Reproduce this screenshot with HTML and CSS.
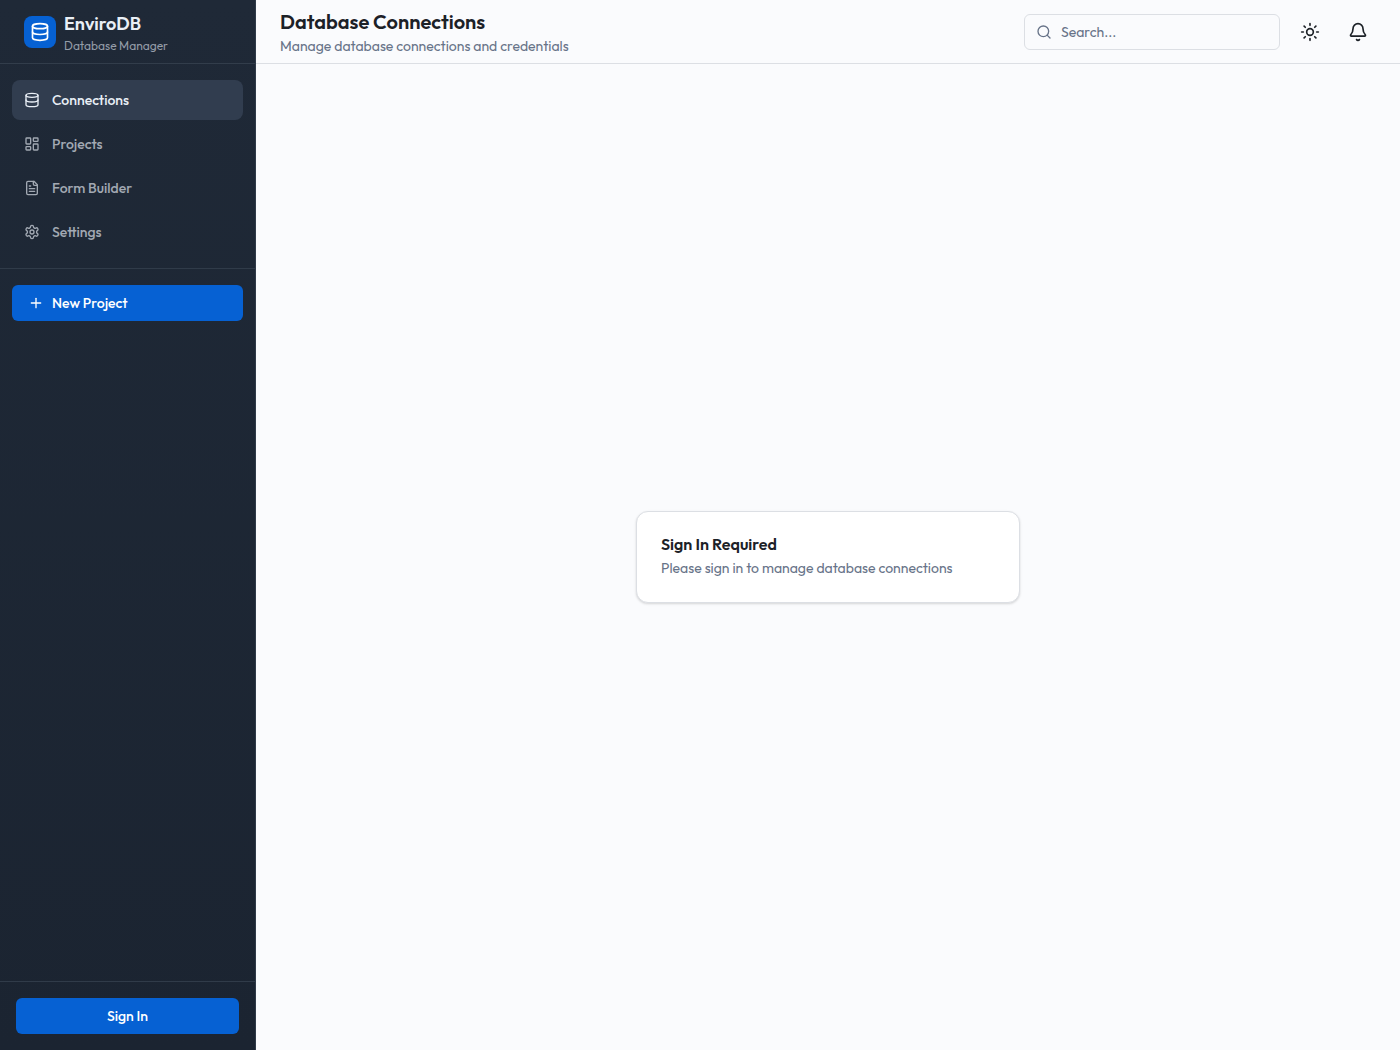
FILE: index.html
```html
<!DOCTYPE html>
<html lang="en">
<head>
<meta charset="utf-8">
<meta name="viewport" content="width=device-width, initial-scale=1">
<title>EnviroDB – Database Connections</title>
<link rel="stylesheet" href="styles.css">
</head>
<body>
<div class="app">
  <aside class="sidebar">
    <div class="brand">
      <span class="brand-logo">
        <svg class="icon icon-md" viewBox="0 0 24 24" aria-hidden="true"><ellipse cx="12" cy="5" rx="9" ry="3"/><path d="M3 5v14a9 3 0 0 0 18 0V5"/><path d="M3 12a9 3 0 0 0 18 0"/></svg>
      </span>
      <div class="brand-text">
        <span class="brand-name">EnviroDB</span>
        <span class="brand-tagline">Database Manager</span>
      </div>
    </div>
    <nav class="nav" aria-label="Main">
      <a class="nav-link nav-link-active" href="#connections" aria-current="page">
        <svg class="icon" viewBox="0 0 24 24" aria-hidden="true"><ellipse cx="12" cy="5" rx="9" ry="3"/><path d="M3 5v14a9 3 0 0 0 18 0V5"/><path d="M3 12a9 3 0 0 0 18 0"/></svg>
        Connections
      </a>
      <a class="nav-link" href="#projects">
        <svg class="icon" viewBox="0 0 24 24" aria-hidden="true"><rect x="3" y="3" width="7" height="9" rx="1"/><rect x="14" y="3" width="7" height="5" rx="1"/><rect x="14" y="12" width="7" height="9" rx="1"/><rect x="3" y="16" width="7" height="5" rx="1"/></svg>
        Projects
      </a>
      <a class="nav-link" href="#forms">
        <svg class="icon" viewBox="0 0 24 24" aria-hidden="true"><path d="M15 2H6a2 2 0 0 0-2 2v16a2 2 0 0 0 2 2h12a2 2 0 0 0 2-2V7Z"/><path d="M14 2v4a2 2 0 0 0 2 2h4"/><path d="M10 9H8"/><path d="M16 13H8"/><path d="M16 17H8"/></svg>
        Form Builder
      </a>
      <a class="nav-link" href="#settings">
        <svg class="icon" viewBox="0 0 24 24" aria-hidden="true"><path d="M12.22 2h-.44a2 2 0 0 0-2 2v.18a2 2 0 0 1-1 1.73l-.43.25a2 2 0 0 1-2 0l-.15-.08a2 2 0 0 0-2.73.73l-.22.38a2 2 0 0 0 .73 2.73l.15.1a2 2 0 0 1 1 1.72v.51a2 2 0 0 1-1 1.74l-.15.09a2 2 0 0 0-.73 2.73l.22.38a2 2 0 0 0 2.73.73l.15-.08a2 2 0 0 1 2 0l.43.25a2 2 0 0 1 1 1.73V20a2 2 0 0 0 2 2h.44a2 2 0 0 0 2-2v-.18a2 2 0 0 1 1-1.73l.43-.25a2 2 0 0 1 2 0l.15.08a2 2 0 0 0 2.73-.73l.22-.39a2 2 0 0 0-.73-2.73l-.15-.08a2 2 0 0 1-1-1.74v-.5a2 2 0 0 1 1-1.74l.15-.09a2 2 0 0 0 .73-2.73l-.22-.38a2 2 0 0 0-2.73-.73l-.15.08a2 2 0 0 1-2 0l-.43-.25a2 2 0 0 1-1-1.73V4a2 2 0 0 0-2-2z"/><circle cx="12" cy="12" r="3"/></svg>
        Settings
      </a>
    </nav>
    <div class="actions">
      <button class="button button-start" type="button">
        <svg class="icon" viewBox="0 0 24 24" aria-hidden="true"><path d="M5 12h14"/><path d="M12 5v14"/></svg>
        New Project
      </button>
    </div>
    <div class="account">
      <button class="button" type="button">Sign In</button>
    </div>
  </aside>
  <div class="content">
    <header class="topbar">
      <div class="heading">
        <h1 class="title">Database Connections</h1>
        <p class="subtitle">Manage database connections and credentials</p>
      </div>
      <div class="tools">
        <label class="search">
          <svg class="icon" viewBox="0 0 24 24" aria-hidden="true"><circle cx="11" cy="11" r="8"/><path d="m21 21-4.3-4.3"/></svg>
          <input class="search-input" type="search" placeholder="Search..." aria-label="Search">
        </label>
        <button class="icon-button" type="button" aria-label="Toggle theme">
          <svg class="icon icon-md" viewBox="0 0 24 24" aria-hidden="true"><circle cx="12" cy="12" r="4"/><path d="M12 2v2"/><path d="M12 20v2"/><path d="m4.93 4.93 1.41 1.41"/><path d="m17.66 17.66 1.41 1.41"/><path d="M2 12h2"/><path d="M20 12h2"/><path d="m6.34 17.66-1.41 1.41"/><path d="m19.07 4.93-1.41 1.41"/></svg>
        </button>
        <button class="icon-button" type="button" aria-label="Notifications">
          <svg class="icon icon-md" viewBox="0 0 24 24" aria-hidden="true"><path d="M10.27 21a2 2 0 0 0 3.46 0"/><path d="M3.26 15.33A1 1 0 0 0 4 17h16a1 1 0 0 0 .74-1.67C19.41 13.96 18 12.5 18 8A6 6 0 0 0 6 8c0 4.5-1.41 5.96-2.74 7.33"/></svg>
        </button>
      </div>
    </header>
    <main class="main">
      <section class="card">
        <h2 class="card-title">Sign In Required</h2>
        <p class="card-text">Please sign in to manage database connections</p>
      </section>
    </main>
  </div>
</div>
</body>
</html>
```
FILE: styles.css
```css
*,
*::before,
*::after {
  box-sizing: border-box;
}

body {
  margin: 0;
  background: #fafbfd;
  color: #1c2127;
  font: 400 14px/20px Outfit, Lato, sans-serif;
}

h1,
h2,
p {
  margin: 0;
}

button,
input {
  font: inherit;
  color: inherit;
}

.app {
  display: flex;
  min-height: 100vh;
}

.icon {
  width: 16px;
  height: 16px;
  flex: none;
  fill: none;
  stroke: currentColor;
  stroke-width: 2;
  stroke-linecap: round;
  stroke-linejoin: round;
}

.icon-md {
  width: 20px;
  height: 20px;
}

.sidebar {
  display: flex;
  flex-direction: column;
  flex: none;
  width: 256px;
  border-right: 1px solid #303b49;
  background: linear-gradient(#1f2937, #1b2431);
  color: #e9eff6;
}

.brand {
  display: flex;
  align-items: center;
  gap: 8px;
  height: 64px;
  padding: 0 24px;
  border-bottom: 1px solid #323d4b;
}

.brand-logo {
  display: grid;
  place-items: center;
  width: 32px;
  height: 32px;
  border-radius: 8px;
  background: #0661d3;
  color: #fff;
}

.brand-text {
  display: flex;
  flex-direction: column;
}

.brand-name {
  font-size: 18px;
  font-weight: 600;
  line-height: 28px;
}

.brand-tagline {
  color: #949ca7;
  font-size: 12px;
  line-height: 16px;
}

.nav {
  display: flex;
  flex-direction: column;
  gap: 4px;
  padding: 16px 12px;
  border-bottom: 1px solid #303b49;
}

.nav-link {
  display: flex;
  align-items: center;
  gap: 12px;
  height: 40px;
  padding: 0 12px;
  border-radius: 8px;
  color: #a2a9b3;
  font-weight: 500;
  text-decoration: none;
}

.nav-link-active {
  background: #313d4f;
  color: #e9eff6;
}

.actions {
  padding: 16px 12px;
}

.account {
  margin-top: auto;
  padding: 16px;
  border-top: 1px solid #303b49;
}

.button {
  display: flex;
  align-items: center;
  justify-content: center;
  gap: 8px;
  width: 100%;
  height: 36px;
  padding: 0 16px;
  border: 0;
  border-radius: 6px;
  background: #0661d3;
  color: #fff;
  font-weight: 500;
}

.button-start {
  justify-content: flex-start;
}

.content {
  display: flex;
  flex: 1;
  flex-direction: column;
  min-width: 0;
}

.topbar {
  display: flex;
  align-items: center;
  justify-content: space-between;
  gap: 24px;
  height: 64px;
  padding: 0 24px;
  border-bottom: 1px solid #dcdfe4;
}

.title {
  font-size: 20px;
  font-weight: 600;
  line-height: 28px;
}

.subtitle,
.card-text {
  color: #677388;
}

.tools {
  display: flex;
  align-items: center;
  gap: 12px;
}

.search {
  display: flex;
  align-items: center;
  gap: 9px;
  width: 256px;
  height: 36px;
  padding: 0 11px;
  border: 1px solid #dcdfe4;
  border-radius: 6px;
  color: #677388;
}

.search-input {
  flex: 1;
  min-width: 0;
  padding: 0;
  border: 0;
  outline: 0;
  background: transparent;
}

.search-input::placeholder {
  color: #677388;
  opacity: 1;
}

.icon-button {
  display: grid;
  place-items: center;
  width: 36px;
  height: 36px;
  padding: 0;
  border: 0;
  border-radius: 6px;
  background: transparent;
}

.main {
  display: grid;
  flex: 1;
  place-items: center;
  padding: 24px;
}

.card {
  width: 100%;
  max-width: 384px;
  padding: 24px;
  border: 1px solid #dcdfe4;
  border-radius: 12px;
  background: #fff;
  box-shadow: 0 1px 3px rgb(0 0 0 / 10%), 0 1px 2px rgb(0 0 0 / 6%);
}

.card-title {
  margin-bottom: 6px;
  font-size: 16px;
  font-weight: 600;
  line-height: 16px;
}
```
